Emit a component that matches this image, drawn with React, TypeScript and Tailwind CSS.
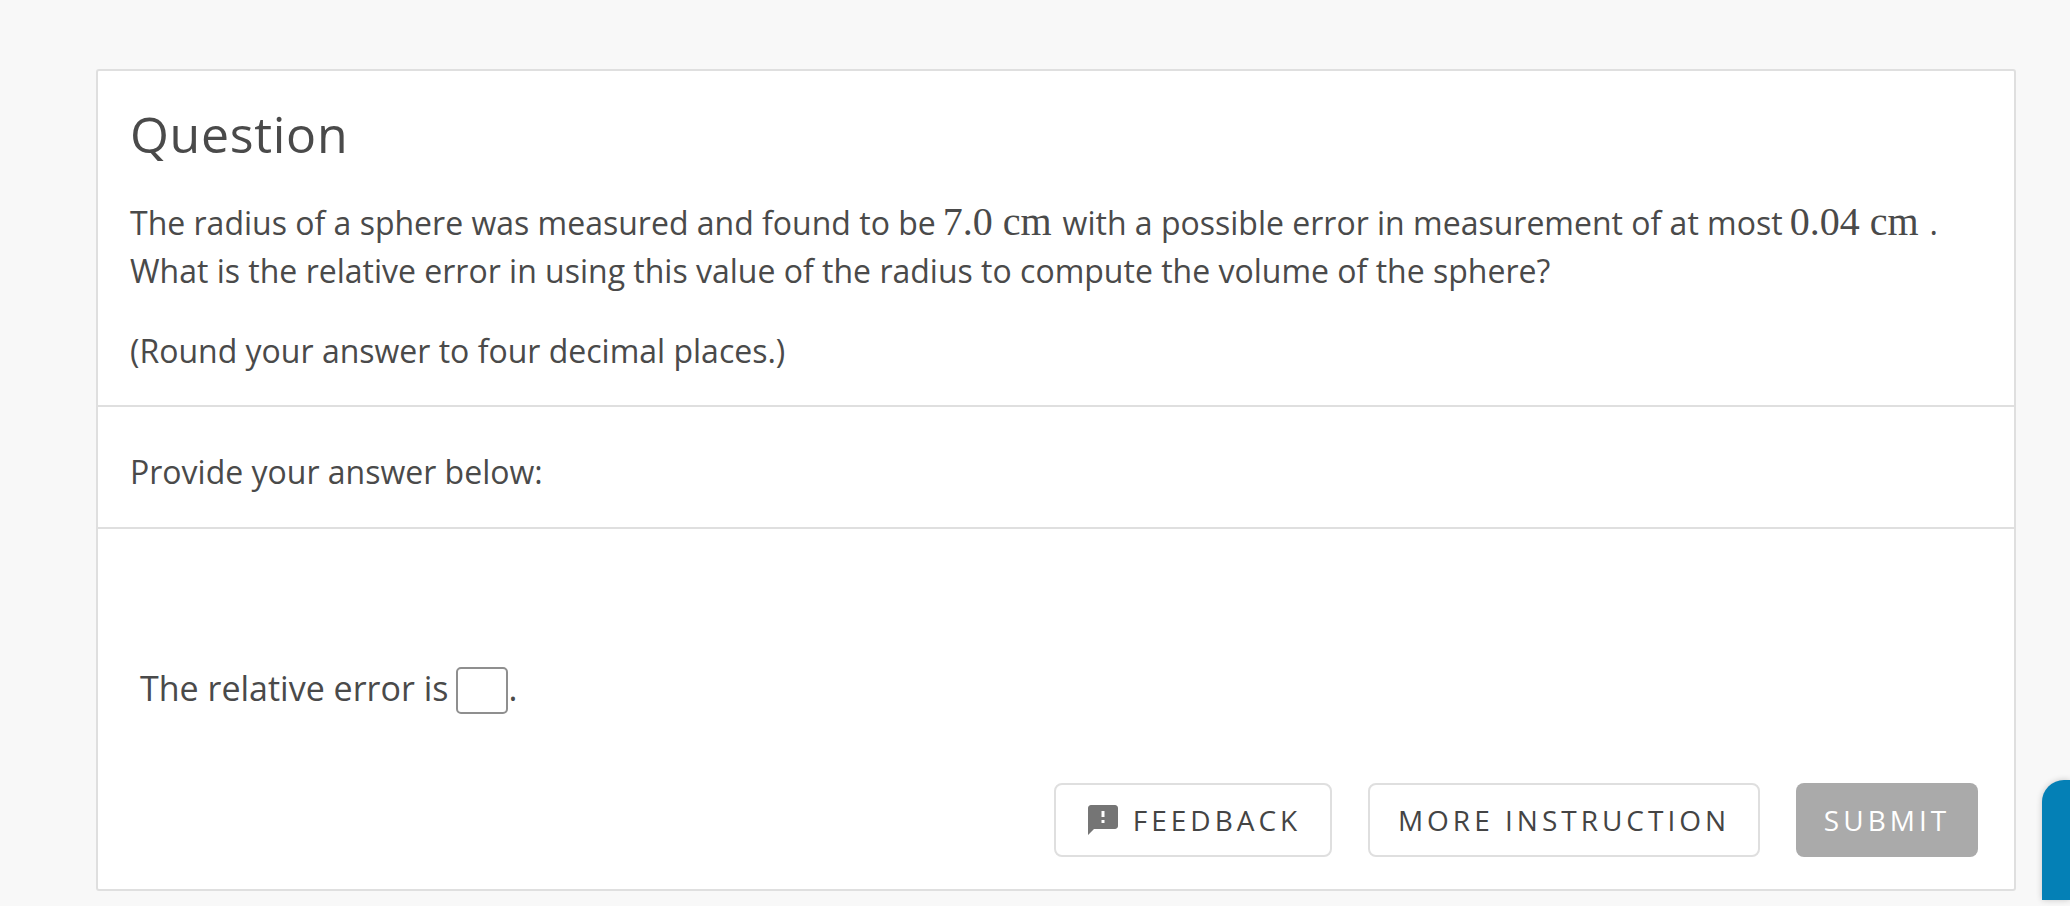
import { MdFeedback } from "react-icons/md";

function MathText({ children }: { children: string }) {
  return (
    <span className="font-['Liberation_Serif',serif] text-[40px] leading-[1] ml-[7px] mr-[11px] text-[#4a4a4a]">
      {children}
    </span>
  );
}

export default function App() {
  return (
    <div className="relative min-h-[906px] bg-[#f8f8f8] font-['Open_Sans',sans-serif] text-[#4a4a4a] pt-[69px] pl-[96px] pr-[54px] overflow-hidden">
      <div className="border-2 border-[#dfdfdf] bg-white rounded-[3px] h-[822px] flex flex-col">
        <div className="px-[32px] pt-[32px] h-[336px] border-b-2 border-[#dfdfdf]">
          <h1 className="text-[50px] leading-[62px] tracking-[0.7px]">Question</h1>
          <p className="text-[32px] leading-[48px] mt-[34px]">
            The radius of a sphere was measured and found to be<MathText>7.0 cm</MathText>with a possible error in measurement of at most<MathText>0.04 cm</MathText>.
            <br />
            What is the relative error in using this value of the radius to compute the volume of the sphere?
          </p>
          <p className="text-[32px] leading-[48px] mt-[32px]">(Round your answer to four decimal places.)</p>
        </div>
        <div className="px-[32px] pt-[10px] h-[122px] flex items-center border-b-2 border-[#dfdfdf] text-[32px]">
          Provide your answer below:
        </div>
        <div className="flex-1 flex flex-col">
          <div className="pl-[42px] pt-[136px] h-[187px] flex items-center text-[34px]">
            <span className="leading-[40px] mb-[6px]">The relative error is</span>
            <span className="w-[52px] h-[47px] border-2 border-[#8f8f8f] rounded-[5px] ml-[8px] inline-block" />
            <span className="leading-[40px] mb-[6px]">.</span>
          </div>
          <div className="flex justify-end gap-[36px] pr-[36px] mt-[67px]">
            <button className="h-[74px] w-[278px] border-2 border-[#dfdfdf] rounded-[8px] flex items-center justify-center gap-[12px] text-[28px] font-medium tracking-[4px] text-[#444444]">
              <MdFeedback className="w-[36px] h-[36px] text-[#757575]" />
              FEEDBACK
            </button>
            <button className="h-[74px] w-[392px] border-2 border-[#dfdfdf] rounded-[8px] text-[28px] font-medium tracking-[4px] text-[#444444]">
              MORE INSTRUCTION
            </button>
            <button className="h-[74px] w-[182px] bg-[#aaaaaa] rounded-[8px] text-[28px] font-medium tracking-[4px] text-white">
              SUBMIT
            </button>
          </div>
        </div>
      </div>
      <div className="absolute right-0 top-[780px] w-[28px] h-[120px] bg-[#0480b6] rounded-tl-[22px] shadow-[0_0_6px_rgba(0,0,0,0.2)]" />
    </div>
  );
}
